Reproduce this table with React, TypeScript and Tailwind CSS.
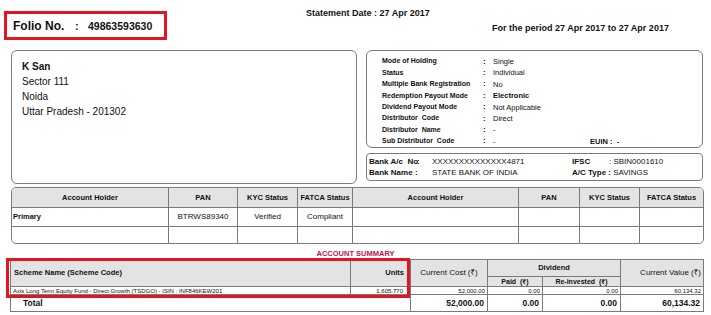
import React from "react";

const infoRows: { label: string; value: string; bold?: boolean; euin?: boolean }[] = [
  { label: "Mode of Holding", value: "Single" },
  { label: "Status", value: "Individual" },
  { label: "Multiple Bank Registration", value: "No" },
  { label: "Redemption Payout Mode", value: "Electronic", bold: true },
  { label: "Dividend Payout Mode", value: "Not Applicable" },
  { label: "Distributor  Code", value: "Direct" },
  { label: "Distributor  Name", value: "-" },
  { label: "Sub Distributor  Code", value: "-", euin: true },
];

const holderCols = [157, 69, 60, 55, 166, 61, 60, 65];
const holderHeaders = ["Account Holder", "PAN", "KYC Status", "FATCA Status", "Account Holder", "PAN", "KYC Status", "FATCA Status"];
const holderRow1 = ["Primary", "BTRWS89340", "Verified", "Compliant", "", "", "", ""];

export default function App() {
  return (
    <div className="w-[711px] h-[315px] bg-white overflow-hidden text-[#111] font-['Liberation_Sans','Noto_Sans','DejaVu_Sans',sans-serif]">
      {/* Top header */}
      <div className="flex h-[50px]">
        <div className="ml-[4px] mt-[11px] w-[163px] h-[29px] border-[3px] border-[#e3161f] flex items-center pl-[6px] pt-[1px] shrink-0">
          <span className="w-[62px] text-[12px] font-bold leading-none">Folio No.</span>
          <span className="w-[13px] text-[11px] font-bold leading-none">:</span>
          <span className="text-[10.5px] font-bold leading-none">49863593630</span>
        </div>
        <div className="ml-[139px] flex flex-col">
          <div className="mt-[7px] text-[9px] font-bold leading-[12px] whitespace-nowrap">Statement Date : 27 Apr 2017</div>
          <div className="ml-[186px] mt-[3px] text-[9px] font-bold leading-[12px] whitespace-nowrap">
            For the period 27 Apr 2017 to 27 Apr 2017
          </div>
        </div>
      </div>

      {/* Middle boxes */}
      <div className="flex ml-[11px] h-[134px]">
        <div className="w-[346px] h-[134px] rounded-[6px] border border-[#7a7a7a] pt-[8px] pl-[10px] text-[10px] leading-[15px] shrink-0">
          <div className="font-bold">K San</div>
          <div>Sector 111</div>
          <div>Noida</div>
          <div>Uttar Pradesh - 201302</div>
        </div>
        <div className="ml-[9px] w-[337px] flex flex-col">
          <div className="h-[98px] rounded-[6px] border border-[#7a7a7a] pt-[5px] pl-[15px]">
            {infoRows.map((r) => (
              <div key={r.label} className="flex h-[11.4px] items-center whitespace-pre">
                <span className="w-[101px] text-[7px] font-bold">{r.label}</span>
                <span className="w-[10px] text-[8px] font-bold">:</span>
                <span className={`w-[97px] text-[7.5px] ${r.bold ? "font-bold" : ""}`}>{r.value}</span>
                {r.euin && <span className="text-[7.5px] font-bold">EUIN :&nbsp;&nbsp;-</span>}
              </div>
            ))}
          </div>
          <div className="mt-[5px] h-[28px] rounded-[4px] border border-[#7a7a7a] pt-[2px] pl-[2px] text-[8px] leading-[11px]">
            <div className="flex whitespace-pre">
              <span className="w-[48px] font-bold">Bank A/c  No</span>
              <span className="w-[15px] font-bold">:</span>
              <span className="w-[140px]">XXXXXXXXXXXXXX4871</span>
              <span className="w-[37px] font-bold">IFSC</span>
              <span>: SBIN0001610</span>
            </div>
            <div className="flex whitespace-pre">
              <span className="w-[46px] font-bold">Bank Name</span>
              <span className="w-[17px] font-bold">:</span>
              <span className="w-[140px]">STATE BANK OF INDIA</span>
              <span className="font-bold">A/C Type :</span>
              <span> SAVINGS</span>
            </div>
          </div>
        </div>
      </div>

      {/* Account holder table */}
      <div className="ml-[11px] mt-[3px] w-[693px] rounded-[5px] border border-[#7a7a7a] overflow-hidden">
        <div className="grid grid-cols-[157px_69px_60px_55px_166px_61px_60px_63px] grid-rows-[20px_19px_16px]">
          {holderHeaders.map((h, i) => (
            <div
              key={"h" + i}
              className={`bg-[#e3e3e3] border-b border-[#7a7a7a] ${i < 7 ? "border-r" : ""} flex items-start justify-center pt-[4px] text-[7.5px] font-bold`}
            >
              {h}
            </div>
          ))}
          {holderRow1.map((v, i) => (
            <div
              key={"r" + i}
              className={`border-b border-[#7a7a7a] ${i < 7 ? "border-r" : ""} flex items-center ${i === 0 ? "justify-start pl-[1px] font-bold text-[7.5px]" : "justify-center text-[8px]"}`}
            >
              {v}
            </div>
          ))}
          {holderCols.map((_, i) => (
            <div key={"e" + i} className={`border-[#7a7a7a] ${i < 7 ? "border-r" : ""}`} />
          ))}
        </div>
      </div>

      {/* Account summary */}
      <div className="mt-[5px] text-center text-[7.5px] leading-[10px] font-bold text-[#c4124a]">ACCOUNT SUMMARY</div>
      <div className="relative ml-[10px] w-[693px]">
        <table className="w-[693px] table-fixed border-collapse border border-[#7a7a7a]">
          <colgroup>
            <col className="w-[340px]" />
            <col className="w-[60px]" />
            <col className="w-[77px]" />
            <col className="w-[55px]" />
            <col className="w-[78px]" />
            <col className="w-[83px]" />
          </colgroup>
          <tbody>
            <tr className="h-[17px] bg-[#e3e3e3]">
              <td rowSpan={2} className="border border-[#7a7a7a] pl-[3px] text-left text-[7.5px] font-bold">
                Scheme Name (Scheme Code)
              </td>
              <td rowSpan={2} className="border border-[#7a7a7a] pr-[6px] text-right text-[7.5px] font-bold">
                Units
              </td>
              <td rowSpan={2} className="border border-[#7a7a7a] text-center text-[8px]">
                Current Cost (₹)
              </td>
              <td colSpan={2} className="border border-[#7a7a7a] text-center text-[7.5px] font-bold leading-none">
                Dividend
              </td>
              <td rowSpan={2} className="border border-[#7a7a7a] pr-[2px] text-right text-[8px]">
                Current Value (₹)
              </td>
            </tr>
            <tr className="h-[10px] bg-[#e3e3e3]">
              <td className="border border-[#7a7a7a] text-center text-[7px] font-bold leading-none">Paid&nbsp;&nbsp;(₹)</td>
              <td className="border border-[#7a7a7a] text-center text-[7px] font-bold leading-none whitespace-nowrap">
                Re-invested&nbsp;&nbsp;(₹)
              </td>
            </tr>
            <tr className="h-[8px] text-[6px] leading-none">
              <td className="border border-[#7a7a7a] pl-[2px] whitespace-nowrap">
                Axis Long Term Equity Fund - Direct Growth (TSDGO) - ISIN : INF846KEW201
              </td>
              <td className="border border-[#7a7a7a] pr-[7px] text-right">1,605.770</td>
              <td className="border border-[#7a7a7a] pr-[2px] text-right">52,000.00</td>
              <td className="border border-[#7a7a7a] pr-[2px] text-right">0.00</td>
              <td className="border border-[#7a7a7a] pr-[2px] text-right">0.00</td>
              <td className="border border-[#7a7a7a] pr-[2px] text-right">60,134.32</td>
            </tr>
            <tr className="h-[17px] text-[8.5px] font-bold leading-none">
              <td colSpan={2} className="border border-[#7a7a7a] pl-[12px] align-top pt-[4px]">Total</td>
              <td className="border border-[#7a7a7a] pr-[3px] text-right">52,000.00</td>
              <td className="border border-[#7a7a7a] pr-[3px] text-right">0.00</td>
              <td className="border border-[#7a7a7a] pr-[3px] text-right">0.00</td>
              <td className="border border-[#7a7a7a] pr-[3px] text-right">60,134.32</td>
            </tr>
          </tbody>
        </table>
        <div className="absolute left-[-4px] top-[-1px] w-[404px] h-[40px] border-[3px] border-[#e3161f] pointer-events-none" />
      </div>
    </div>
  );
}
